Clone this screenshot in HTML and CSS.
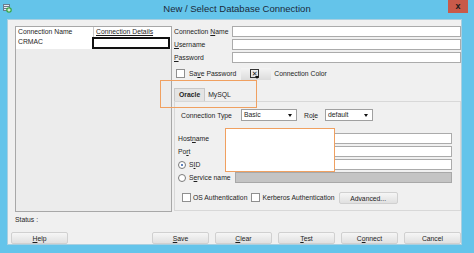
FILE: index.html
```html
<!DOCTYPE html>
<html lang="en">
  <head>
    <meta charset="UTF-8" />
    <title>New / Select Database Connection</title>
    <link rel="stylesheet" href="styles.css">
  </head>
  <body>
    <div class="window">
      <div class="titlebar">
        <svg class="app-icon" width="9" height="9" viewBox="0 0 9 9">
          <rect x="0.5" y="0.5" width="6" height="6" fill="#e8eef4" stroke="#6a7c8c" />
          <line x1="0.5" y1="2.5" x2="6.5" y2="2.5" stroke="#6a7c8c" />
          <line x1="0.5" y1="4.5" x2="6.5" y2="4.5" stroke="#6a7c8c" />
          <circle cx="6" cy="6" r="2.8" fill="#38a848" />
          <path d="M6 4.4v3.2M4.4 6h3.2" stroke="#fff" stroke-width="1" />
        </svg>
        <div class="title">New / Select Database Connection</div>
        <div class="close">x</div>
      </div>
      <div class="client">
        <div class="main">
          <div class="conn-list">
            <div class="list-row head">
              <div class="cell c1">Connection Name</div>
              <div class="cell c2"><u>Connection Details</u></div>
            </div>
            <div class="list-row">
              <div class="cell c1">CRMAC</div>
              <div class="cell c2 selected"></div>
            </div>
          </div>
          <div class="form">
            <div class="field">
              <label>Connection <u>N</u>ame</label>
              <div class="input"></div>
            </div>
            <div class="field">
              <label><u>U</u>sername</label>
              <div class="input"></div>
            </div>
            <div class="field">
              <label><u>P</u>assword</label>
              <div class="input"></div>
            </div>
            <div class="save-row">
              <span class="check"></span>
              <span>Sa<u>v</u>e Password</span>
              <div class="color-btn"><span class="color-box">✕</span><span class="caret"></span></div>
              <span>Connection Color</span>
            </div>
            <div class="tabs">
              <div class="tab active">Oracle</div>
              <div class="tab">MySQL</div>
            </div>
            <div class="panel">
              <div class="type-row">
                <span class="type-label">Connection Type</span>
                <div class="select basic">Basic<span class="arrow"></span></div>
                <span>Ro<u>l</u>e</span>
                <div class="select role">default<span class="arrow"></span></div>
              </div>
              <div class="host-grid">
                <label>Host<u>n</u>ame</label>
                <div class="input"></div>
                <label>Po<u>r</u>t</label>
                <div class="input"></div>
                <label><span class="radio on"></span>S<u>I</u>D</label>
                <div class="input"></div>
                <label><span class="radio"></span>S<u>e</u>rvice name</label>
                <div class="input disabled"></div>
              </div>
              <div class="auth-row">
                <span class="check"></span>
                <span>OS Authentication</span>
                <span class="check"></span>
                <span>Kerberos Authentication</span>
                <div class="btn adv">Advanced...</div>
              </div>
            </div>
          </div>
        </div>
        <div class="status">Status :</div>
        <div class="buttons">
          <div class="btn"><u>H</u>elp</div>
          <div class="spacer"></div>
          <div class="btn"><u>S</u>ave</div>
          <div class="btn"><u>C</u>lear</div>
          <div class="btn"><u>T</u>est</div>
          <div class="btn">C<u>o</u>nnect</div>
          <div class="btn">Cancel</div>
        </div>
      </div>
      <div class="mark mark-tabs"></div>
      <div class="mark mark-host"></div>
    </div>
  </body>
</html>
```

FILE: styles.css
```css
* {
  margin: 0;
  padding: 0;
  box-sizing: border-box;
}
html,
body {
  width: 474px;
  height: 253px;
  overflow: hidden;
  background: #64c4ea;
  font-family: "Liberation Sans", "DejaVu Sans", sans-serif;
  font-size: 6.8px;
  color: #1e1e1e;
  white-space: nowrap;
}
u {
  text-decoration: underline;
}
.window {
  position: relative;
  width: 474px;
  height: 253px;
  display: flex;
  flex-direction: column;
}
.titlebar {
  height: 20px;
  display: flex;
  align-items: flex-start;
  padding-left: 3px;
}
.app-icon {
  margin-top: 4px;
}
.title {
  flex: 1;
  text-align: center;
  font-size: 9.5px;
  line-height: 18px;
  color: #1a2a3a;
  padding-left: 14px;
}
.close {
  width: 20px;
  height: 13px;
  margin-right: 6px;
  background: #c85a4a;
  color: #1a1a1a;
  font-weight: bold;
  font-size: 9px;
  text-align: center;
  line-height: 12px;
}
.client {
  margin: 0 12px 8px 7px;
  flex: 1;
  background: #f0f0f0;
  border: 1px solid #a9cfe0;
  display: flex;
  flex-direction: column;
  padding: 6px 0 0 4px;
}
.main {
  display: flex;
  height: 186px;
}
.conn-list {
  width: 157px;
  margin-left: 3px;
  border: 1px solid #a8a8a8;
  background: #ececec;
}
.list-row {
  display: flex;
  background: #fff;
  height: 12px;
}
.list-row.head {
  height: 10px;
}
.cell {
  line-height: 10px;
  padding-left: 2px;
}
.c1 {
  width: 77px;
}
.c2 {
  flex: 1;
  border-left: 1px solid #c8c8c8;
}
.c2.selected {
  border: 2px solid #111;
  margin-left: -1px;
  margin-right: 1px;
}
.form {
  flex: 1;
  padding-left: 2px;
}
.field {
  display: flex;
  align-items: center;
  height: 11px;
  margin-bottom: 2px;
}
.field:nth-child(3) {
  margin-top: 2px;
}
.field label {
  width: 58px;
}
.input {
  flex: 1;
  height: 11px;
  background: #fff;
  border: 1px solid #ababab;
}
.save-row {
  display: flex;
  align-items: center;
  height: 13px;
  margin-top: 4px;
  padding-left: 2px;
}
.check {
  width: 9px;
  height: 9px;
  border: 1px solid #8f8f8f;
  background: #fff;
  margin-right: 4px;
}
.color-btn {
  width: 30px;
  height: 12px;
  margin: 0 3px 0 5px;
  background: linear-gradient(#f4f4f4, #dcdcdc);
  display: flex;
  align-items: center;
  padding-left: 9px;
}
.color-box {
  width: 9px;
  height: 9px;
  border: 1px solid #333;
  font-size: 7px;
  line-height: 7px;
  text-align: center;
}
.caret {
  width: 0;
  height: 0;
  border-left: 2px solid transparent;
  border-right: 2px solid transparent;
  border-top: 3px solid #111;
  margin: 7px 0 0 -4px;
}
.tabs {
  display: flex;
  margin-top: 7px;
  height: 14px;
  align-items: flex-end;
}
.tab {
  padding: 0 3px;
  line-height: 12px;
}
.tab.active {
  font-weight: bold;
  background: #e4e4e4;
  border: 1px solid #c8c8c8;
  border-bottom: none;
  padding: 0 4px;
  height: 13px;
}
.panel {
  height: 110px;
  border: 1px solid #d8d8d8;
  padding: 7px 8px 0 3px;
}
.type-row {
  display: flex;
  align-items: center;
  height: 12px;
}
.type-label {
  padding-left: 3px;
  width: 63px;
}
.select {
  position: relative;
  height: 12px;
  background: #fff;
  border: 1px solid #a0a0a0;
  line-height: 10px;
  padding-left: 2px;
}
.select.basic {
  width: 56px;
  margin-right: 7px;
}
.select.role {
  width: 48px;
  margin-left: 7px;
}
.arrow {
  position: absolute;
  right: 4px;
  top: 4px;
  border-left: 2.5px solid transparent;
  border-right: 2.5px solid transparent;
  border-top: 3px solid #111;
}
.host-grid {
  display: grid;
  grid-template-columns: 57px 1fr;
  grid-auto-rows: 11px;
  row-gap: 2px;
  margin-top: 12px;
  align-items: center;
}
.host-grid label {
  display: flex;
  align-items: center;
}
.input.disabled {
  background: #c4c4c4;
  border-color: #a8a8a8;
}
.radio {
  width: 8px;
  height: 8px;
  border-radius: 50%;
  border: 1px solid #7a7a7a;
  background: #fff;
  margin-right: 3px;
  position: relative;
}
.radio.on::after {
  content: "";
  position: absolute;
  left: 2px;
  top: 2px;
  width: 2px;
  height: 2px;
  border-radius: 50%;
  background: #2a5aa8;
}
.auth-row {
  display: flex;
  align-items: center;
  height: 13px;
  margin-top: 8px;
  padding-left: 4px;
}
.auth-row .check {
  margin-right: 2px;
}
.auth-row .check:nth-child(3) {
  margin-left: 4px;
}
.btn {
  height: 12px;
  line-height: 11px;
  text-align: center;
  background: linear-gradient(#f6f6f6, #e0e0e0);
  border: 1px solid #d0d0d0;
  border-radius: 2px;
}
.btn.adv {
  width: 59px;
  margin-left: 4px;
}
.status {
  height: 12px;
  line-height: 12px;
  padding-left: 3px;
  margin-top: 2px;
}
.buttons {
  display: flex;
  gap: 6px;
  margin-top: 6px;
  margin-left: -1px;
}
.buttons .btn {
  width: 57px;
}
.spacer {
  flex: 1;
}
.mark {
  position: absolute;
  border: 1.5px solid #f0a060;
}
.mark-tabs {
  left: 160px;
  top: 80px;
  width: 97px;
  height: 28px;
}
.mark-host {
  left: 225px;
  top: 128px;
  width: 110px;
  height: 44px;
  background: #fff;
}
```
